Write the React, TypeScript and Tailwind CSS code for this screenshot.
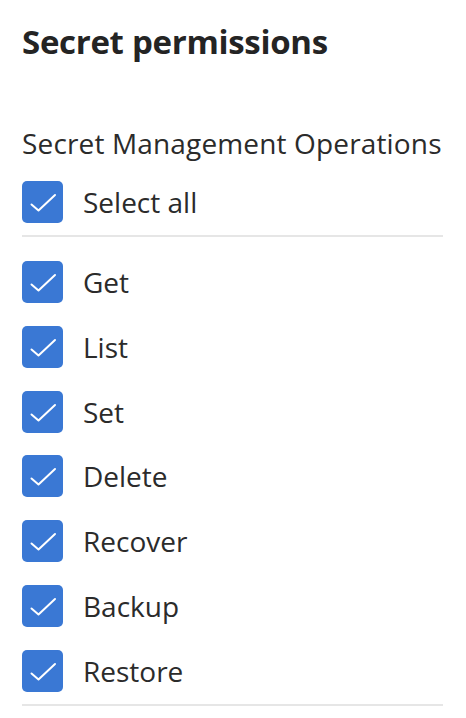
import React from "react";

const items = ["Get", "List", "Set", "Delete", "Recover", "Backup", "Restore"];

function Box() {
  return (
    <div className="w-[41px] h-[42px] rounded-[5px] bg-[#3a78d4] flex items-center justify-center shrink-0">
      <svg width="41" height="42" viewBox="0 0 41 42" fill="none">
        <path d="M9.5 23.5 L16.5 29.5 L33 14" stroke="white" strokeWidth="2" strokeLinecap="round" strokeLinejoin="round" />
      </svg>
    </div>
  );
}

function Row({ label }: { label: string }) {
  return (
    <div className="flex items-center h-[42px] gap-[20px]">
      <Box />
      <span className="text-[28px] leading-none text-[#2b2b2b]">{label}</span>
    </div>
  );
}

export default function App() {
  return (
    <div className="w-[466px] h-[718px] bg-white pl-[22px] pr-[23px] overflow-hidden" style={{ fontFamily: '"Open Sans", "Noto Sans", sans-serif' }}>
      <h1 className="text-[33px] font-bold tracking-[-0.3px] text-[#242424] leading-none pt-[25px] whitespace-nowrap">Secret permissions</h1>
      <div className="text-[28px] leading-none tracking-[0.15px] text-[#2b2b2b] mt-[71px] whitespace-nowrap">Secret Management Operations</div>
      <div className="mt-[24px]">
        <Row label="Select all" />
      </div>
      <div className="h-[2px] bg-[#e6e6e6] mt-[12px]" />
      <div className="flex flex-col gap-[22.8px] mt-[24px]">
        {items.map((i) => (
          <Row key={i} label={i} />
        ))}
      </div>
      <div className="h-[2px] bg-[#e6e6e6] mt-[12px]" />
    </div>
  );
}
